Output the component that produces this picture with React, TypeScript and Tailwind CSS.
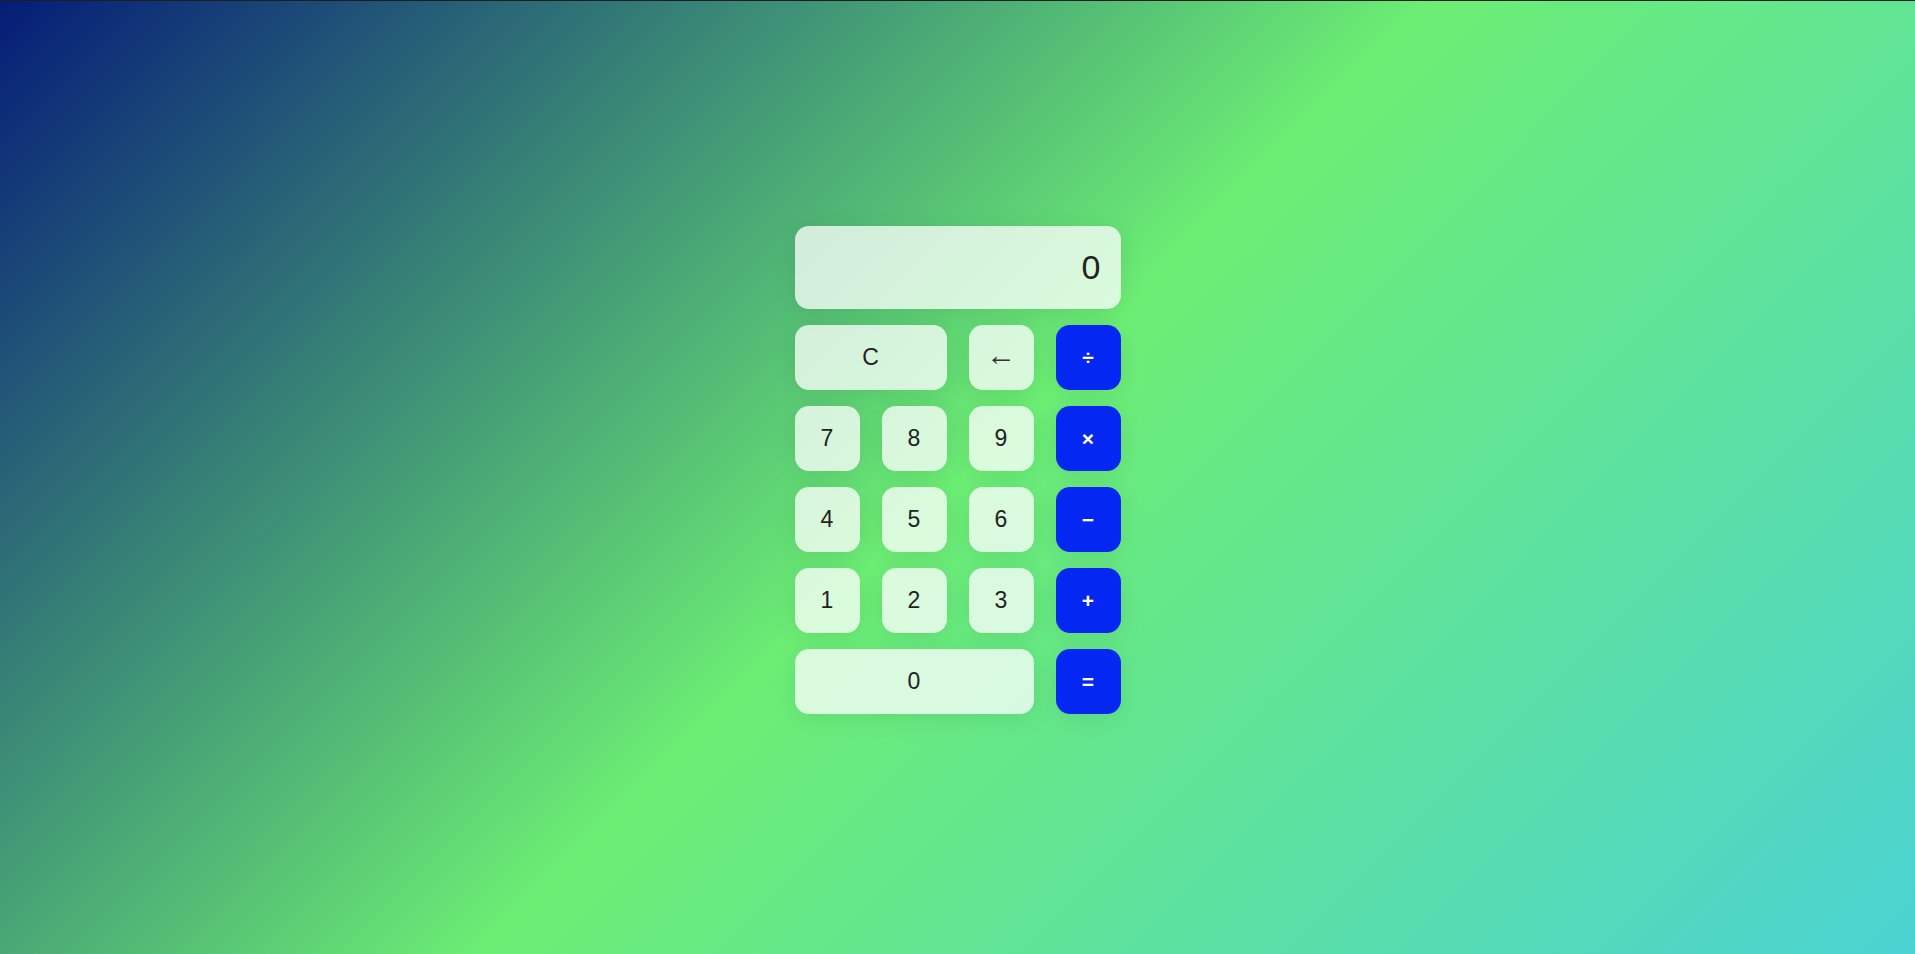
import React, { useState } from 'react';

type Key = { label: string; kind: 'num' | 'op' | 'fn'; span?: string };

const KEYS: Key[] = [
  { label: 'C', kind: 'fn', span: 'col-span-2' },
  { label: '←', kind: 'fn' },
  { label: '÷', kind: 'op' },
  { label: '7', kind: 'num' },
  { label: '8', kind: 'num' },
  { label: '9', kind: 'num' },
  { label: '×', kind: 'op' },
  { label: '4', kind: 'num' },
  { label: '5', kind: 'num' },
  { label: '6', kind: 'num' },
  { label: '−', kind: 'op' },
  { label: '1', kind: 'num' },
  { label: '2', kind: 'num' },
  { label: '3', kind: 'num' },
  { label: '+', kind: 'op' },
  { label: '0', kind: 'num', span: 'col-span-3' },
  { label: '=', kind: 'op' },
];

export default function App() {
  const [value, setValue] = useState('0');

  const press = (k: Key) => {
    if (k.label === 'C') return setValue('0');
    if (k.label === '←') return setValue(v => (v.length > 1 ? v.slice(0, -1) : '0'));
    if (k.label === '=') {
      try {
        const expr = value.replace(/×/g, '*').replace(/÷/g, '/').replace(/−/g, '-');
        // eslint-disable-next-line no-new-func
        const r = Function(`return (${expr})`)();
        setValue(String(r));
      } catch {
        setValue('0');
      }
      return;
    }
    setValue(v => (v === '0' && k.kind === 'num' ? k.label : v + k.label));
  };

  return (
    <div
      className="h-screen w-full border-t border-[#1e1e1e] bg-[linear-gradient(135deg,#051c78_0%,#6cee74_50%,#4bd2d2_100%)] flex flex-col items-center pt-[225px]"
      style={{ fontFamily: '"Liberation Sans", Arial, sans-serif' }}
    >
      <div className="w-[326px] flex flex-col gap-4">
        {/* Display */}
        <div className="h-[83px] rounded-[14px] bg-white/75 shadow-[0_4px_24px_rgba(0,0,0,0.08)] flex items-center justify-end pr-5 text-[34px] text-[#222]">
          {value}
        </div>

        {/* Keys */}
        <div className="grid grid-cols-4 gap-x-[22px] gap-y-4">
          {KEYS.map(k => (
            <button
              key={k.label}
              onClick={() => press(k)}
              className={`${k.span ?? ''} h-[65px] rounded-[14px] flex items-center justify-center shadow-[0_4px_24px_rgba(0,0,0,0.08)] ${
                k.kind === 'op'
                  ? 'bg-[#0527f2] text-white font-bold text-[21px]'
                  : k.label === '←'
                  ? 'bg-white/75 text-[#333] text-[30px] leading-none pb-1.5'
                  : 'bg-white/75 text-[#222] text-[23px]'
              }`}
            >
              {k.label}
            </button>
          ))}
        </div>
      </div>
    </div>
  );
}
